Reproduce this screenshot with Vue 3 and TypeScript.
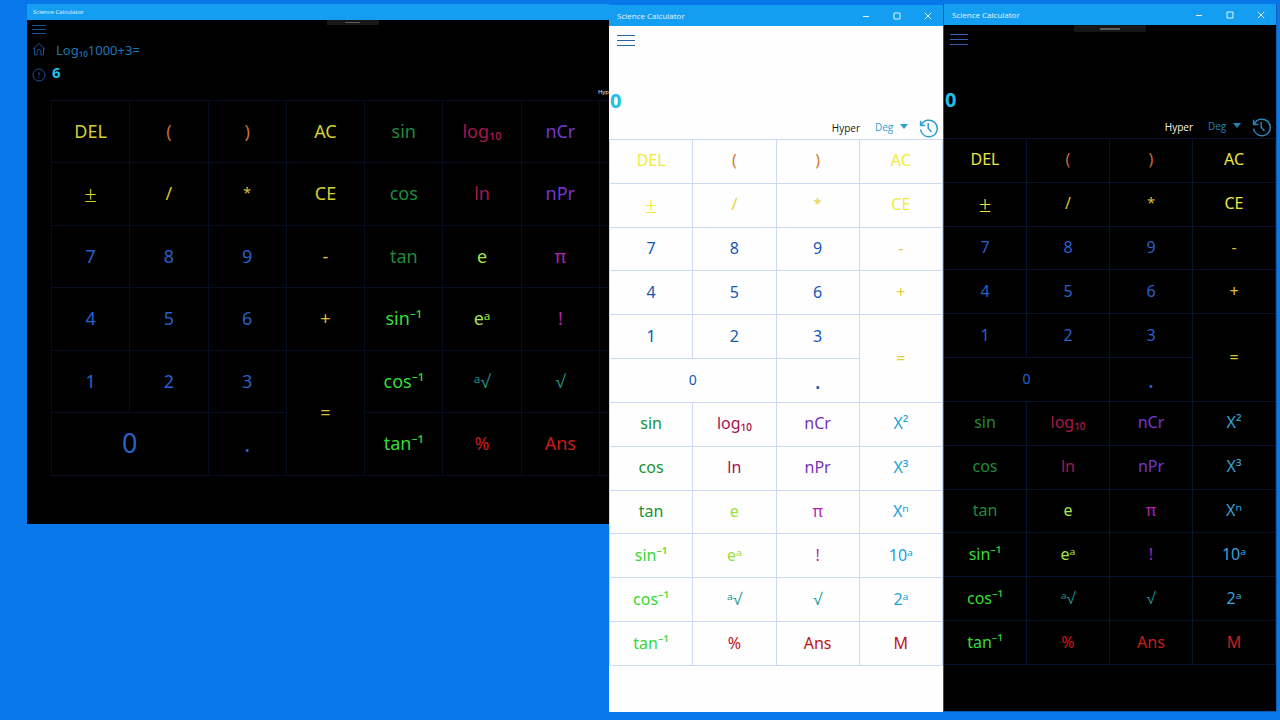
<script setup lang="ts">
interface Key {
  label: string
  tone: string
  shape?: string
}

interface CalcWindow {
  id: string
  theme: 'light' | 'dark'
  wide: boolean
  handle: boolean
  controls: boolean
  expression: string
  result: string
  hyper: string
  keys: Key[]
}

const k = (label: string, tone: string, shape = ''): Key => ({ label, tone, shape })

const basicRows: Key[][] = [
  [k('DEL', 'edit'), k('(', 'paren'), k(')', 'paren'), k('AC', 'edit')],
  [k('±', 'edit', 'sign'), k('/', 'op'), k('*', 'op', 'times'), k('CE', 'edit')],
  [k('7', 'digit'), k('8', 'digit'), k('9', 'digit'), k('-', 'op')],
  [k('4', 'digit'), k('5', 'digit'), k('6', 'digit'), k('+', 'op')],
  [k('1', 'digit'), k('2', 'digit'), k('3', 'digit'), k('=', 'op', 'tall')],
  [k('0', 'digit', 'zero'), k('.', 'digit', 'point')],
]

const scienceRows: Key[][] = [
  [k('sin', 'trig'), k('log₁₀', 'log'), k('nCr', 'comb'), k('X²', 'power')],
  [k('cos', 'trig'), k('ln', 'log'), k('nPr', 'comb'), k('X³', 'power')],
  [k('tan', 'trig'), k('e', 'euler'), k('π', 'pi'), k('Xⁿ', 'power')],
  [k('sin⁻¹', 'inverse'), k('eᵃ', 'euler'), k('!', 'pi'), k('10ᵃ', 'power')],
  [k('cos⁻¹', 'inverse'), k('ᵃ√', 'root'), k('√', 'root'), k('2ᵃ', 'power')],
  [k('tan⁻¹', 'inverse'), k('%', 'result'), k('Ans', 'result'), k('M', 'result')],
]

const tallKeys = [...basicRows, ...scienceRows].flat()
const wideKeys = basicRows.flatMap((row, i) => [...row, ...scienceRows[i].slice(0, 3), k('', 'edge')])

const windows: CalcWindow[] = [
  { id: 'wide', theme: 'dark', wide: true, handle: true, controls: false, expression: 'Log₁₀1000+3=', result: '6', hyper: 'Hyp', keys: wideKeys },
  { id: 'day', theme: 'light', wide: false, handle: false, controls: true, expression: '', result: '0', hyper: 'Hyper', keys: tallKeys },
  { id: 'night', theme: 'dark', wide: false, handle: true, controls: true, expression: '', result: '0', hyper: 'Hyper', keys: tallKeys },
]
</script>

<template>
  <main class="desktop">
    <section v-for="w in windows" :key="w.id" class="window" :class="[w.id, w.theme, w.wide ? 'landscape' : 'portrait']">
      <header class="titlebar">
        <span class="title">Science Calculator</span>
        <div v-if="w.controls" class="controls">
          <button type="button" aria-label="Minimize">
            <svg viewBox="0 0 8 8"><path d="M1 4.5h6" /></svg>
          </button>
          <button type="button" aria-label="Maximize">
            <svg viewBox="0 0 8 8"><path d="M1 1h6v6h-6z" /></svg>
          </button>
          <button type="button" aria-label="Close">
            <svg viewBox="0 0 8 8"><path d="M.8.8l6.4 6.4M7.2.8l-6.4 6.4" /></svg>
          </button>
        </div>
      </header>

      <div class="body">
        <div v-if="w.handle" class="handle"><i></i></div>

        <nav class="rail">
          <button type="button" class="icon menu" aria-label="Menu">
            <svg v-if="w.wide" viewBox="0 0 14 10"><path d="M0 1.500h14M0 5.500h14M0 9.500h14" /></svg>
            <svg v-else viewBox="0 0 18 12"><path d="M0 1.500h18M0 6.500h18M0 11.500h18" /></svg>
          </button>
          <template v-if="w.wide">
            <button type="button" class="icon nav" aria-label="Home">
              <svg viewBox="0 0 14 14"><path d="M1 7.2L7 1.5l6 5.700M2.500 6v6.800h2.700v-3.600a1.800 1.800 0 0 1 3.600 0v3.600h2.700V6" /></svg>
            </button>
            <button type="button" class="icon nav" aria-label="About">
              <svg viewBox="0 0 14 14"><circle cx="7" cy="7" r="6" /><path d="M7 4v4M7 9v1.200" /></svg>
            </button>
          </template>
        </nav>

        <div class="calculator">
          <div class="screen">
            <output v-if="w.expression" class="expression">{{ w.expression }}</output>
            <output class="value">{{ w.result }}</output>
          </div>

          <div class="modes">
            <button type="button" class="hyper">{{ w.hyper }}</button>
            <template v-if="!w.wide">
              <label class="angle">
                <select aria-label="Angle unit">
                  <option>Deg</option>
                </select>
                <svg viewBox="0 0 8 5"><path d="M0 0h8L4 5z" /></svg>
              </label>
              <button type="button" class="history" aria-label="History">
                <svg viewBox="0 0 20 20">
                  <path d="M2.300 7.200a8.300 8.300 0 1 1-.6 4.300M1.600 2.800v4.700h4.700M9.200 5v5.300l3.300 3.600" />
                </svg>
              </button>
            </template>
          </div>

          <div class="keypad">
            <template v-for="(key, i) in w.keys" :key="i">
              <button v-if="key.label" type="button" class="key" :class="[key.tone, key.shape]">{{ key.label }}</button>
              <span v-else class="edge"></span>
            </template>
          </div>
        </div>
      </div>
    </section>
  </main>
</template>

<style>
body {
  margin: 0;
  background: #0877e9;
}
</style>

<style scoped>
.desktop {
  box-sizing: border-box;
  display: grid;
  grid-template-columns: 582fr 334fr 334fr;
  min-height: 100vh;
  padding: 4px 3px 8px 27px;
  background: #0877e9;
  font-family: 'Noto Sans', 'Open Sans', sans-serif;
}

.window {
  box-sizing: border-box;
  display: flex;
  flex-direction: column;
  min-width: 0;
  background: var(--surface);
}

.light {
  --surface: #fefefe;
  --line: #cadaf3;
  --menu: #2763a8;
  --accent: #2d9fd0;
  --text: #1c1c1c;
  --edit: #eeec3c;
  --op: #e6cf3c;
  --paren: #cf7a30;
  --digit: #1557b8;
  --trig: #1a9136;
  --inverse: #36d833;
  --log: #a8124e;
  --comb: #7630b8;
  --power: #1aa3d8;
  --euler: #9be03c;
  --pi: #b822b4;
  --root: #1c9a90;
  --result: #bf1218;
}

.dark {
  --surface: #000;
  --line: #071330;
  --menu: #3560b4;
  --accent: #2583b8;
  --text: #f2f2f2;
  --edit: #ebe640;
  --op: #dcc038;
  --paren: #cb6a30;
  --digit: #2860cc;
  --trig: #208a3a;
  --inverse: #38dc36;
  --log: #a41850;
  --comb: #7439cc;
  --power: #37a3da;
  --euler: #a6e448;
  --pi: #b322ac;
  --root: #208f82;
  --result: #c81c1e;
}

.wide {
  --edit: #d4d030;
  --menu: #1a5098;
  --accent: #1c78b4;
  --line: #050d22;
  align-self: start;
  height: 72.2vh;
  min-height: 420px;
}

.portrait {
  min-height: 600px;
}

.day {
  margin-top: 1px;
}

.night {
  border: solid #0a5cb4;
  border-width: 0 1px 1px;
}

button {
  padding: 0;
  border: 0;
  background: none;
  color: inherit;
  font: inherit;
}

svg {
  display: block;
  fill: none;
  stroke: currentColor;
}

.titlebar {
  display: flex;
  align-items: center;
  justify-content: space-between;
  height: 21px;
  padding-left: 8px;
  background: #149ef2;
  color: #e4f5ff;
  font-family: 'Open Sans', sans-serif;
  font-size: 8px;
}

.landscape .titlebar {
  height: 16px;
  padding-left: 6px;
  font-size: 6px;
}

.controls {
  display: flex;
}

.controls button {
  display: grid;
  place-items: center;
  width: 31px;
  height: 21px;
}

.controls svg {
  width: 8px;
  height: 8px;
}

.body {
  position: relative;
  display: flex;
  flex: 1;
  flex-direction: column;
  min-height: 0;
}

.landscape .body {
  flex-direction: row;
}

.handle {
  position: absolute;
  top: 0;
  left: 50%;
  display: grid;
  place-items: center;
  width: 72px;
  height: 7px;
  transform: translateX(-50%);
  background: #171717;
}

.handle i {
  width: 20px;
  height: 2px;
  background: #5c5c5c;
}

.landscape .handle {
  left: 56%;
  width: 52px;
  height: 5px;
}

.landscape .handle i {
  width: 15px;
  height: 1px;
}

.rail {
  display: flex;
  color: var(--menu);
}

.menu {
  padding: 8px 8px 0;
}

.night .menu {
  padding-left: 6px;
}

.menu svg {
  width: 18px;
  height: 12px;
}

.landscape .rail {
  flex-direction: column;
  align-items: center;
  width: 24px;
}

.landscape .menu {
  padding: 4px 0 8px;
}

.landscape .menu svg {
  width: 14px;
  height: 10px;
}

.nav {
  padding-bottom: 12px;
}

.nav svg {
  width: 14px;
  height: 14px;
}

.calculator {
  display: flex;
  flex: 1;
  flex-direction: column;
  min-width: 0;
}

.screen {
  display: flex;
  flex-direction: column;
  color: #22bfe6;
}

.value {
  padding-left: 1px;
  font-size: 20px;
  font-weight: 700;
  line-height: 24px;
}

.portrait .screen {
  padding: 43px 0 3px;
}

.landscape .screen {
  padding-top: 20px;
}

.expression {
  padding-left: 5px;
  color: var(--accent);
  font-size: 13px;
  line-height: 20px;
}

.landscape .value {
  font-size: 15px;
}

.modes {
  display: flex;
  align-items: center;
  justify-content: flex-end;
  height: 23px;
  padding-right: 4px;
  color: var(--accent);
  font-family: 'Open Sans', sans-serif;
  font-size: 10px;
}

.hyper {
  color: var(--text);
}

.portrait .hyper {
  padding-right: 15px;
}

.landscape .modes {
  height: 16px;
  padding: 0;
  font-size: 6px;
}

.angle {
  display: flex;
  align-items: center;
  padding-bottom: 2px;
}

.angle select {
  width: 25px;
  padding: 0;
  border: 0;
  appearance: none;
  background: none;
  color: inherit;
  font: inherit;
}

.angle svg {
  width: 8px;
  height: 5px;
  fill: currentColor;
  stroke: none;
}

.history {
  padding-left: 11px;
}

.history svg {
  width: 20px;
  height: 20px;
  stroke-width: 1.500;
}

.keypad {
  display: grid;
  flex: 1;
  grid-template-columns: repeat(4, 1fr);
  grid-auto-rows: 1fr;
  margin-bottom: 46px;
  border-top: 1px solid var(--line);
  font-size: 16px;
  line-height: 20px;
}

.day .keypad {
  border-left: 1px solid var(--line);
}

.landscape .keypad {
  grid-template-columns: repeat(7, 1fr) 9px;
  margin-bottom: 48px;
  border-left: 1px solid var(--line);
  font-size: 18px;
}

.key {
  min-width: 0;
  padding-bottom: 2px;
  border: solid var(--line);
  border-width: 0 1px 1px 0;
}

.edge {
  border-bottom: 1px solid var(--line);
}

.tall {
  grid-row: span 2;
}

.zero {
  grid-column: span 2;
}

.portrait .zero {
  font-size: 14px;
}

.landscape .zero {
  font-size: 27px;
}

.sign {
  font-size: 22px;
  font-weight: 300;
}

.times {
  font-size: 14px;
}

.point {
  font-size: 22px;
}

.edit { color: var(--edit); }
.op { color: var(--op); }
.paren { color: var(--paren); }
.digit { color: var(--digit); }
.trig { color: var(--trig); }
.inverse { color: var(--inverse); }
.log { color: var(--log); }
.comb { color: var(--comb); }
.power { color: var(--power); }
.euler { color: var(--euler); }
.pi { color: var(--pi); }
.root { color: var(--root); }
.result { color: var(--result); }
</style>
